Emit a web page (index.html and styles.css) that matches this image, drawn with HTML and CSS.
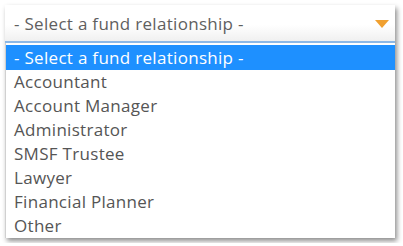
FILE: index.html
```html
<!DOCTYPE html>
<html>
<head>
<meta charset="utf-8">
<link rel="stylesheet" href="styles.css">
</head>
<body>
<div class="wrap">
  <div class="panel">
    <div class="select">
      <span class="value">- Select a fund relationship -</span>
      <span class="caret"></span>
    </div>
    <ul class="list">
      <li class="opt active">- Select a fund relationship -</li>
      <li class="opt">Accountant</li>
      <li class="opt">Account Manager</li>
      <li class="opt">Administrator</li>
      <li class="opt">SMSF Trustee</li>
      <li class="opt">Lawyer</li>
      <li class="opt">Financial Planner</li>
      <li class="opt">Other</li>
    </ul>
  </div>
</div>
</body>
</html>
```
FILE: styles.css
```css
html, body {
  margin: 0;
  padding: 0;
  background: #ffffff;
}
.wrap {
  padding: 5px;
}
.panel {
  width: 390px;
  height: 233px;
  background: #ffffff;
  box-shadow: 2px 3px 5px rgba(0, 0, 0, 0.45);
  font-family: "Open Sans", "Lato", sans-serif;
  font-size: 17px;
  letter-spacing: 0.3px;
  color: #5a5a5a;
  overflow: hidden;
  display: flex;
  flex-direction: column;
}
.select {
  height: 39px;
  box-sizing: border-box;
  padding: 1px 6px 0 9px;
  display: flex;
  align-items: center;
  justify-content: space-between;
  background: linear-gradient(#ffffff 0%, #ffffff 55%, #f0f0f0 100%);
  border-bottom: 2px solid #8cb8e6;
}
.value {
  color: #5f5f5f;
}
.caret {
  width: 0;
  height: 0;
  border-left: 7px solid transparent;
  border-right: 7px solid transparent;
  border-top: 8px solid #f0a030;
  margin-top: 1px;
}
.list {
  list-style: none;
  margin: 0;
  padding: 2px 0 0 0;
  border-left: 1px solid #d0d0d0;
  flex: 1;
}
.opt {
  height: 24px;
  line-height: 24px;
  padding-left: 8px;
  color: #555555;
}
.opt.active {
  height: 25px;
  line-height: 25px;
  background: #1e90ff;
  color: #ffffff;
}
```
